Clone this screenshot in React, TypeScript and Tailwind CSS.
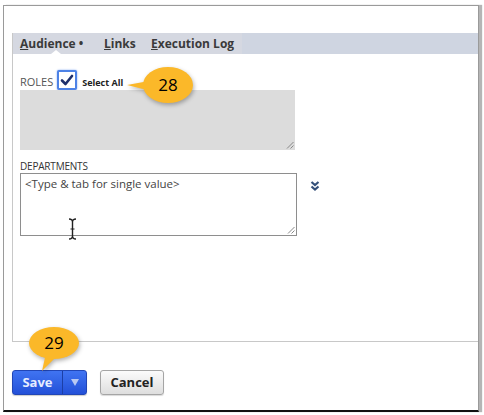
import React from "react";

const font = { fontFamily: '"Open Sans", "DejaVu Sans", sans-serif' };

function Grip() {
  return (
    <svg className="absolute right-[1px] bottom-[1px]" width="8" height="8" viewBox="0 0 8 8">
      <line x1="1" y1="7.5" x2="7.5" y2="1" stroke="#888" strokeWidth="1" />
      <line x1="4.5" y1="7.5" x2="7.5" y2="4.5" stroke="#888" strokeWidth="1" />
    </svg>
  );
}

function Callout({ num, tail }: { num: string; tail: "left" | "down" }) {
  return (
    <div className="relative w-[66px] h-[52px]">
      <svg width="66" height="52" viewBox="0 0 66 52" className="absolute left-0 top-0" style={{ filter: "drop-shadow(1px 2px 2px rgba(0,0,0,0.3))" }}>
        {tail === "left" ? (
          <>
            <path d="M0 18 L22 14 L24 24 Z" fill="#fbb829" />
            <ellipse cx="41" cy="18" rx="25" ry="18" fill="#fbb829" />
          </>
        ) : (
          <>
            <path d="M13 44 L17 26 L27 30 Z" fill="#fbb829" />
            <ellipse cx="25" cy="16" rx="25" ry="16" fill="#fbb829" />
          </>
        )}
      </svg>
      <span
        className={
          "absolute text-[17px] leading-none text-black " +
          (tail === "left" ? "left-[16px] top-[9px] w-[50px] text-center" : "left-0 top-[7px] w-[50px] text-center")
        }
        style={font}
      >
        {num}
      </span>
    </div>
  );
}

export default function App() {
  return (
    <div className="w-[484px] h-[415px] bg-white relative overflow-hidden" style={font}>
      <div className="absolute left-[3px] top-[5px] w-[476px] h-[407px] border-l border-t border-r border-[#9a9a9a] border-b-2 border-b-[#111] shadow-[3px_0_1px_#b5b5b5] flex flex-col pl-[8px] pt-[27px]">
        {/* inner panel */}
        <div className="h-[309px] border-l border-b border-[#c8c8c8] flex flex-col">
          {/* tab bar */}
          <div className="h-[21px] bg-[#cfd5e1] flex shrink-0">
            <div className="w-[229px] shrink-0 bg-[#d5d8e1] flex items-center pl-[7px] text-[12px] font-bold text-[#3a3a3a] relative whitespace-nowrap">
              <span className="w-[84px] shrink-0">
                <span className="underline">A</span>udience •
              </span>
              <span className="w-[47px] shrink-0">
                <span className="underline">L</span>inks
              </span>
              <span className="shrink-0">
                <span className="underline">E</span>xecution Log
              </span>
              <div className="absolute left-[38px] bottom-0 w-0 h-0 border-l-[5px] border-r-[5px] border-b-[4px] border-l-transparent border-r-transparent border-b-white" />
            </div>
          </div>
          {/* content */}
          <div className="pl-[7px] pt-[16px] flex flex-col">
            <div className="flex items-end h-[20px]">
              <span className="text-[11px] text-[#555] leading-none mb-[3px]">ROLES</span>
              <div className="ml-[4px] w-[20px] h-[20px] border-2 border-[#4d82e6] rounded-[2px] bg-white flex items-center justify-center shadow-[0_0_2px_#7aa2f0]">
                <svg width="14" height="12" viewBox="0 0 14 12">
                  <path d="M2 6.5 L5.5 10 L12 2" fill="none" stroke="#1d2f6b" strokeWidth="2.6" strokeLinecap="round" strokeLinejoin="round" />
                </svg>
              </div>
              <span className="ml-[5px] text-[9px] font-bold text-[#222] leading-none mb-[3px]">Select All</span>
            </div>
            <div className="relative w-[275px] h-[60px] bg-[#dcdcdc]">
              <Grip />
            </div>
            <div className="mt-[10px] text-[10px] text-[#333] leading-[13px] h-[13px] tracking-[-0.2px]">DEPARTMENTS</div>
            <div className="flex items-start">
              <div className="relative w-[277px] h-[63px] border border-[#8e8e8e] px-[4px] pt-[2px] text-[11.5px] text-[#444] leading-[15px]">
                &lt;Type &amp; tab for single value&gt;
                <Grip />
                <svg className="absolute left-[47px] top-[44px]" width="9" height="22" viewBox="0 0 9 22">
                  <path d="M1 1 Q4.5 1 4.5 4 L4.5 18 Q4.5 21 1 21 M8 1 Q4.5 1 4.5 4 M4.5 18 Q4.5 21 8 21" fill="none" stroke="#222" strokeWidth="1.4" />
                  <line x1="2.5" y1="11" x2="6.5" y2="11" stroke="#222" strokeWidth="1" />
                </svg>
              </div>
              <svg className="ml-[13px] mt-[8px]" width="10" height="10" viewBox="0 0 10 10">
                <path d="M1.5 1 L5 4 L8.5 1" fill="none" stroke="#34507a" strokeWidth="2.2" />
                <path d="M1.5 5.5 L5 8.5 L8.5 5.5" fill="none" stroke="#34507a" strokeWidth="2.2" />
              </svg>
            </div>
          </div>
        </div>
        {/* buttons */}
        <div className="flex items-center mt-[28px] text-[13px] font-bold">
          <div className="w-[75px] h-[25px] rounded-[3px] border border-[#2146b6] bg-gradient-to-b from-[#4074f2] to-[#2350d8] flex shadow-[0_1px_1px_rgba(0,0,0,0.2)]">
            <div className="w-[50px] flex items-center justify-center text-[#e6ecff] border-r border-[#1c3fa6]">Save</div>
            <div className="flex-1 flex items-center justify-center">
              <svg width="8" height="7" viewBox="0 0 8 7">
                <path d="M0 0 L8 0 L4 7 Z" fill="#b9c9f2" />
              </svg>
            </div>
          </div>
          <div className="ml-[13px] w-[64px] h-[25px] rounded-[3px] border border-[#a5a5a5] bg-gradient-to-b from-[#fbfbfb] to-[#dedede] flex items-center justify-center text-[#222] shadow-[0_1px_1px_rgba(0,0,0,0.15)]">
            Cancel
          </div>
        </div>
      </div>
      {/* callouts */}
      <div className="absolute left-[127px] top-[67px]">
        <Callout num="28" tail="left" />
      </div>
      <div className="absolute left-[29px] top-[327px]">
        <Callout num="29" tail="down" />
      </div>
    </div>
  );
}
